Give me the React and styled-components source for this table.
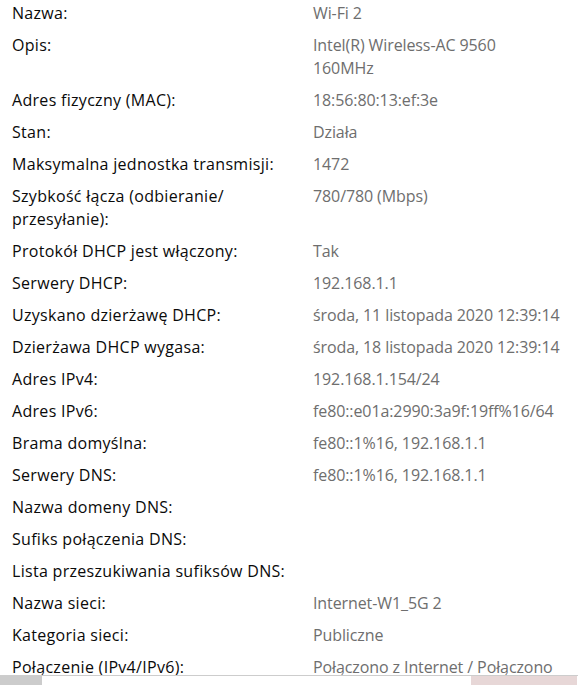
import styled, { createGlobalStyle } from "styled-components";

const GlobalStyle = createGlobalStyle`
  html, body {
    margin: 0;
    padding: 0;
    background: #ffffff;
  }
  body {
    font-family: "Open Sans", "Noto Sans", sans-serif;
    overflow: hidden;
  }
`;

const Window = styled.div`
  width: 578px;
  height: 685px;
  overflow: hidden;
  background: #ffffff;
  display: flex;
  flex-direction: column;
`;

const Scroller = styled.div`
  height: 676px;
  flex-shrink: 0;
  overflow: hidden;
  border-bottom: 1px solid #cdcdcd;
  box-sizing: border-box;
`;

const List = styled.div`
  display: grid;
  grid-template-columns: 301px 1fr;
  row-gap: 9px;
  padding: 2px 0 0 12px;
  font-size: 16px;
  line-height: 23px;
`;

const Label = styled.div`
  color: #0a0a0a;
  letter-spacing: 0.3px;
  white-space: nowrap;
`;

const Value = styled.div`
  color: #6e6e6e;
  letter-spacing: -0.1px;
  white-space: nowrap;
`;

const Footer = styled.div`
  display: flex;
  justify-content: space-between;
  padding: 0 1px 0 0;
`;

const Button = styled.div`
  height: 32px;
  width: ${(p) => p.$width}px;
  background: ${(p) => (p.$accent ? "#e7d7d7" : "#cccccc")};
`;

const rows = [
  ["Nazwa:", "Wi-Fi 2"],
  ["Opis:", ["Intel(R) Wireless-AC 9560", "160MHz"]],
  ["Adres fizyczny (MAC):", "18:56:80:13:ef:3e"],
  ["Stan:", "Działa"],
  ["Maksymalna jednostka transmisji:", "1472"],
  [["Szybkość łącza (odbieranie/", "przesyłanie):"], "780/780 (Mbps)"],
  ["Protokół DHCP jest włączony:", "Tak"],
  ["Serwery DHCP:", "192.168.1.1"],
  ["Uzyskano dzierżawę DHCP:", "środa, 11 listopada 2020 12:39:14"],
  ["Dzierżawa DHCP wygasa:", "środa, 18 listopada 2020 12:39:14"],
  ["Adres IPv4:", "192.168.1.154/24"],
  ["Adres IPv6:", "fe80::e01a:2990:3a9f:19ff%16/64"],
  ["Brama domyślna:", "fe80::1%16, 192.168.1.1"],
  ["Serwery DNS:", "fe80::1%16, 192.168.1.1"],
  ["Nazwa domeny DNS:", ""],
  ["Sufiks połączenia DNS:", ""],
  ["Lista przeszukiwania sufiksów DNS:", ""],
  ["Nazwa sieci:", "Internet-W1_5G 2"],
  ["Kategoria sieci:", "Publiczne"],
  ["Połączenie (IPv4/IPv6):", "Połączono z Internet / Połączono"],
];

const lines = (text) =>
  Array.isArray(text)
    ? text.map((t, i) => (
        <span key={i}>
          {t}
          {i < text.length - 1 && <br />}
        </span>
      ))
    : text;

const App = () => {
  return (
    <Window>
      <GlobalStyle />
      <Scroller>
        <List>
          {rows.map(([label, value], i) => (
            <div key={i} style={{ display: "contents" }}>
              <Label>{lines(label)}</Label>
              <Value>{lines(value)}</Value>
            </div>
          ))}
        </List>
      </Scroller>
      <Footer>
        <Button $width={42} />
        <Button $width={106} $accent />
      </Footer>
    </Window>
  );
};

export default App;
